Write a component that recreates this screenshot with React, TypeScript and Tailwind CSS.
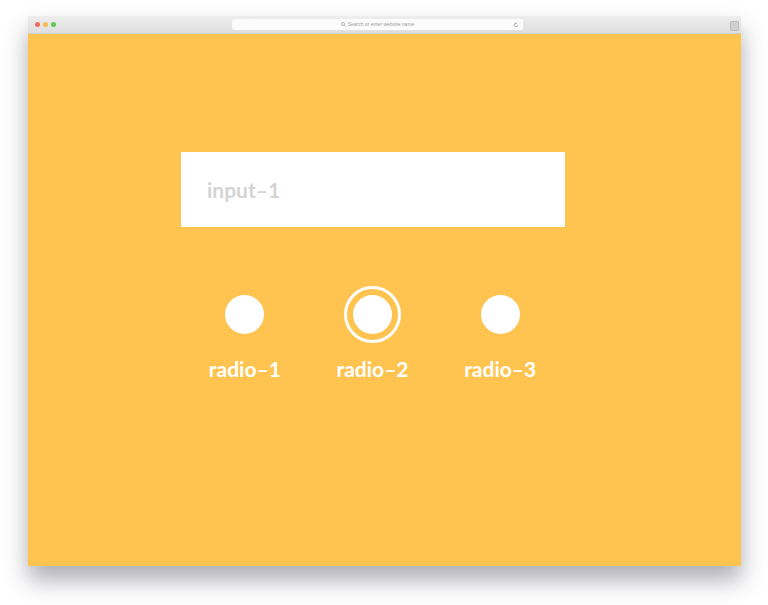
import React from "react";

const radios = [
  { id: "radio-1", label: "radio–1", checked: false },
  { id: "radio-2", label: "radio–2", checked: true },
  { id: "radio-3", label: "radio–3", checked: false },
];

function BrowserBar() {
  return (
    <div className="relative h-[18px] flex items-center bg-gradient-to-b from-[#eeeeee] to-[#dedede] border-b border-[#cfcfcf]">
      {/* traffic lights */}
      <div className="flex items-center gap-[3px] pl-[7px]">
        <span className="w-[5px] h-[5px] rounded-full bg-[#ee6a5f]" />
        <span className="w-[5px] h-[5px] rounded-full bg-[#f5be4f]" />
        <span className="w-[5px] h-[5px] rounded-full bg-[#62c655]" />
      </div>
      {/* address field */}
      <div className="absolute left-[204px] top-[3px] w-[291px] h-[11px] bg-[#fbfbfb] rounded-[2px] flex items-center justify-center">
        <svg width="5" height="5" viewBox="0 0 10 10" className="mr-[2px]">
          <circle cx="4" cy="4" r="3" fill="none" stroke="#9a9a9a" strokeWidth="1.4" />
          <path d="M6.3 6.3 L9 9" stroke="#9a9a9a" strokeWidth="1.4" />
        </svg>
        <span className="text-[5px] leading-none text-[#a0a0a0] font-['Liberation_Sans',sans-serif]">
          Search or enter website name
        </span>
        <svg width="6" height="6" viewBox="0 0 10 10" className="absolute right-[4px]">
          <path d="M8 5 A3 3 0 1 1 5 2" fill="none" stroke="#9a9a9a" strokeWidth="1.2" />
          <path d="M4.5 0.5 L6.5 2 L4.5 3.5" fill="none" stroke="#9a9a9a" strokeWidth="1.1" />
        </svg>
      </div>
      <div className="absolute right-[2px] top-[5px] w-[9px] h-[10px] bg-[#d0d0d0] border border-[#bcbcbc] rounded-[1px]" />
    </div>
  );
}

export default function App() {
  return (
    <div className="w-[768px] h-[605px] bg-white overflow-hidden pt-[16px] pl-[28px] font-['Lato',sans-serif]">
      <div className="w-[713px] shadow-[0_14px_22px_rgba(40,40,60,0.38)]">
        <BrowserBar />

        <div className="h-[532px] bg-[#fec44f] pl-[153px] pt-[118px]">
          {/* text field */}
          <div className="w-[384px] h-[75px] bg-white flex items-center pl-[26px]">
            <span className="text-[21px] font-bold text-[#d4d4d4] leading-none">input–1</span>
          </div>

          {/* radio group */}
          <div className="mt-[59px] w-[383px] grid grid-cols-3">
            {radios.map((r) => (
              <div key={r.id} className="flex flex-col items-center">
                <div
                  className={
                    r.checked
                      ? "w-[57px] h-[57px] rounded-full border-[3px] border-white flex items-center justify-center"
                      : "w-[57px] h-[57px] flex items-center justify-center"
                  }
                >
                  <span className="w-[39px] h-[39px] rounded-full bg-white" />
                </div>
                <span className="mt-[14px] text-[21px] leading-[24px] font-bold text-white">
                  {r.label}
                </span>
              </div>
            ))}
          </div>
        </div>
      </div>
    </div>
  );
}
